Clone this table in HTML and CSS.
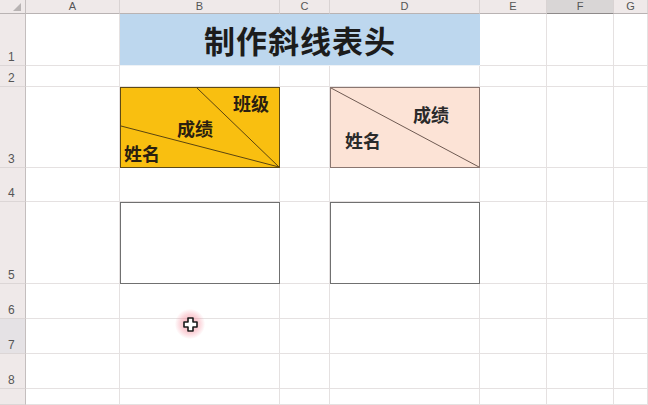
FILE: index.html
```html
<!DOCTYPE html>
<html lang="zh">
<head>
<meta charset="utf-8">
<title>制作斜线表头</title>
<link rel="stylesheet" href="styles.css">
</head>
<body>
<div class="sheet">
  <!-- column headers -->
  <div class="corner"><span class="tri"></span></div>
  <div class="ch">A</div>
  <div class="ch">B</div>
  <div class="ch">C</div>
  <div class="ch">D</div>
  <div class="ch">E</div>
  <div class="ch sel">F</div>
  <div class="ch">G</div>

  <!-- row 1 -->
  <div class="rh">1</div>
  <div class="c"></div>
  <div class="c title">制作斜线表头</div>
  <div class="c"></div>
  <div class="c"></div>
  <div class="c"></div>

  <!-- row 2 -->
  <div class="rh">2</div>
  <div class="c"></div><div class="c"></div><div class="c"></div><div class="c"></div><div class="c"></div><div class="c"></div><div class="c"></div>

  <!-- row 3 -->
  <div class="rh">3</div>
  <div class="c"></div>
  <div class="box orange">
    <svg class="diag" width="158" height="79" viewBox="0 0 158 79">
      <line x1="76" y1="0" x2="158" y2="79" stroke="#5a4410" stroke-width="1"/>
      <line x1="0" y1="38" x2="158" y2="79" stroke="#5a4410" stroke-width="1"/>
    </svg>
    <span class="lbl o1">班级</span>
    <span class="lbl o2">成绩</span>
    <span class="lbl o3">姓名</span>
  </div>
  <div class="c"></div>
  <div class="box peach">
    <svg class="diag" width="148" height="79" viewBox="0 0 148 79">
      <line x1="0" y1="0" x2="148" y2="79" stroke="#6e5a52" stroke-width="1"/>
    </svg>
    <span class="lbl p1">成绩</span>
    <span class="lbl p2">姓名</span>
  </div>
  <div class="c"></div><div class="c"></div><div class="c"></div>

  <!-- row 4 -->
  <div class="rh">4</div>
  <div class="c"></div><div class="c"></div><div class="c"></div><div class="c"></div><div class="c"></div><div class="c"></div><div class="c"></div>

  <!-- row 5 -->
  <div class="rh">5</div>
  <div class="c"></div>
  <div class="box plain"></div>
  <div class="c"></div>
  <div class="box plain"></div>
  <div class="c"></div><div class="c"></div><div class="c"></div>

  <!-- row 6 -->
  <div class="rh">6</div>
  <div class="c"></div><div class="c"></div><div class="c"></div><div class="c"></div><div class="c"></div><div class="c"></div><div class="c"></div>

  <!-- row 7 -->
  <div class="rh hl">7</div>
  <div class="c"></div><div class="c"></div><div class="c"></div><div class="c"></div><div class="c"></div><div class="c"></div><div class="c"></div>

  <!-- row 8 -->
  <div class="rh">8</div>
  <div class="c"></div><div class="c"></div><div class="c"></div><div class="c"></div><div class="c"></div><div class="c"></div><div class="c"></div>

  <!-- row 9 (number below visible area) -->
  <div class="rh"></div>
  <div class="c"></div><div class="c"></div><div class="c"></div><div class="c"></div><div class="c"></div><div class="c"></div><div class="c"></div>

  <div class="cursor">
    <svg width="15" height="15" viewBox="0 0 15 15">
      <path d="M5 1h5v4h4v5h-4v4h-5v-4h-4v-5h4z" fill="#fff" stroke="#1a1a1a" stroke-width="1.6" stroke-linejoin="round"/>
    </svg>
  </div>
</div>
</body>
</html>
```

FILE: styles.css
```css
html, body {
  margin: 0;
  padding: 0;
  background: #fff;
}

body {
  width: 648px;
  height: 405px;
  overflow: hidden;
  font-family: "Noto Sans CJK SC", "Noto Sans", sans-serif;
}

.sheet {
  position: relative;
  display: grid;
  grid-template-columns: 26px 94px 160px 50px 150px 67px 67px 1fr;
  grid-template-rows: 14px 52px 21px 81px 34px 82px 35px 35px 35px 1fr;
  width: 648px;
  height: 405px;
}

.sheet > div {
  box-sizing: border-box;
}

.corner {
  position: relative;
  background: #efe9e9;
  border-right: 1px solid #c4bebe;
  border-bottom: 1px solid #b9b3b3;
}

.tri {
  position: absolute;
  right: 4px;
  bottom: 2px;
  width: 0;
  height: 0;
  border-left: 8px solid transparent;
  border-bottom: 8px solid #b8b3b3;
}

.ch {
  background: #efe9e9;
  border-right: 1px solid #d9d3d3;
  border-bottom: 1px solid #b9b3b3;
  font-family: "Liberation Sans", "Noto Sans", sans-serif;
  font-size: 11px;
  line-height: 13px;
  color: #555;
  text-align: center;
}

.ch.sel {
  background: #d9d6d6;
  border-bottom: 1px solid #8e8a8a;
}

.rh {
  display: flex;
  align-items: flex-end;
  padding: 0 0 1px 8px;
  background: #efe9e9;
  border-right: 1px solid #c4bebe;
  border-bottom: 1px solid #dcd6d6;
  font-family: "Liberation Sans", "Noto Sans", sans-serif;
  font-size: 12px;
  line-height: 14px;
  color: #555;
}

.rh.hl {
  background: #e5e2e5;
}

.c {
  border-right: 1px solid #e5e1e1;
  border-bottom: 1px solid #e5e1e1;
}

.title {
  grid-column: 3 / 6;
  display: flex;
  align-items: center;
  justify-content: center;
  background: #bdd7ee;
  border-right: none;
  border-bottom: 1px solid #eef2f6;
  font-size: 31px;
  font-weight: 600;
  color: #1c1c1c;
  letter-spacing: 1px;
}

.box {
  position: relative;
}

.orange {
  background: #f9bf10;
  border: 1px solid #5e4a16;
}

.peach {
  background: #fce3d6;
  border: 1px solid #8a7670;
}

.plain {
  background: #fff;
  border: 1px solid #707070;
}

.diag {
  position: absolute;
  left: 0;
  top: 0;
  display: block;
}

.lbl {
  position: absolute;
  font-size: 18px;
  line-height: 20px;
  font-weight: 600;
  color: #2a2010;
  white-space: nowrap;
}

.o1 { left: 112px; top: 5px; }
.o2 { left: 56px; top: 30px; }
.o3 { left: 3px; top: 55px; }

.p1 { left: 82px; top: 16px; color: #2a2a2a; }
.p2 { left: 14px; top: 42px; color: #2a2a2a; }

.cursor {
  position: absolute;
  left: 175px;
  top: 309px;
  width: 30px;
  height: 30px;
  display: flex;
  align-items: center;
  justify-content: center;
  border-radius: 50%;
  background: radial-gradient(circle, rgba(238, 110, 130, 0.6) 0%, rgba(245, 145, 160, 0.38) 45%, rgba(255, 255, 255, 0) 72%);
}

.cursor svg {
  display: block;
}
```
